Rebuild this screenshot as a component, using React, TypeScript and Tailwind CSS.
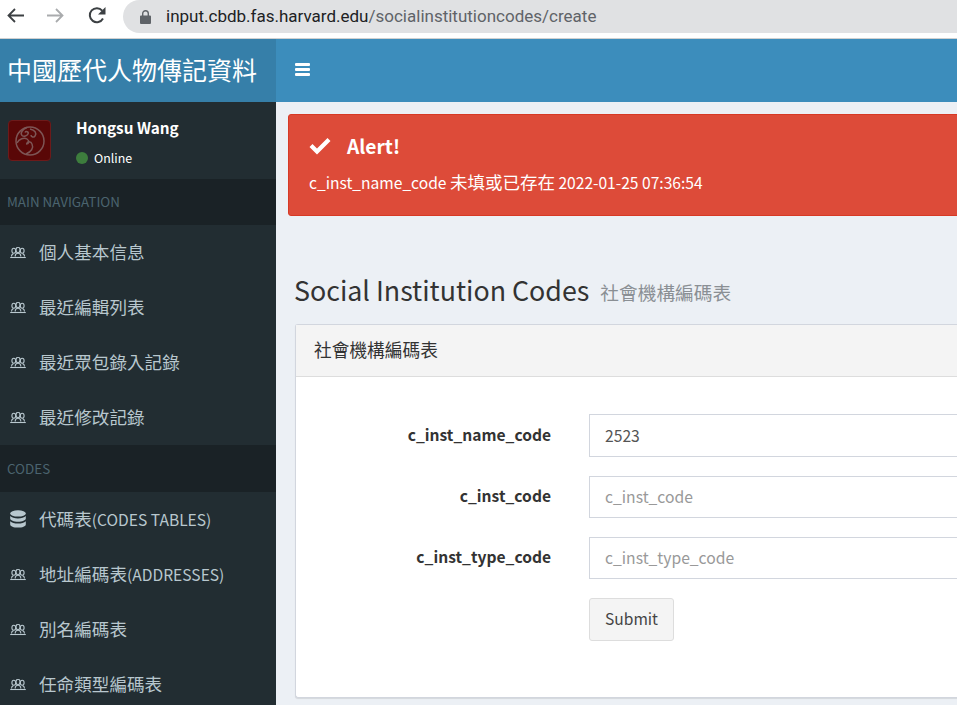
import React from 'react';

const FONT = '"Noto Sans CJK TC", "Noto Sans", sans-serif';

function GroupIcon() {
  return (
    <svg width="16" height="12" viewBox="0 0 16 12" fill="none" stroke="#b8c7ce" strokeWidth="1.1" className="shrink-0">
      <ellipse cx="3.800" cy="3.800" rx="1.900" ry="2.500" />
      <ellipse cx="8" cy="3" rx="2" ry="2.700" />
      <ellipse cx="12.200" cy="3.800" rx="1.900" ry="2.500" />
      <path d="M1.500 9.500c0-1.600.8-2.600 1.900-2.900M14.500 9.500c0-1.600-.8-2.600-1.900-2.900M5.200 9.500c0-2 1.200-3.200 2.800-3.200s2.800 1.200 2.800 3.200" />
      <path d="M0.200 10.500h15.600" />
    </svg>
  );
}

function DatabaseIcon() {
  return (
    <svg width="16" height="19" viewBox="0 0 16 19" fill="#b8c7ce" className="shrink-0">
      <ellipse cx="8" cy="3.400" rx="7.800" ry="3.200" />
      <path d="M.2 6c1.400 1.600 4.500 2.400 7.800 2.400s6.400-.8 7.800-2.400v2.600c0 1.700-3.500 3.200-7.800 3.200S.2 10.300.2 8.600z" />
      <path d="M.2 11.200c1.400 1.600 4.500 2.400 7.800 2.400s6.400-.8 7.800-2.400v3.200c0 1.700-3.500 3.200-7.800 3.200S.2 16.100.2 14.400z" />
    </svg>
  );
}

function Logo() {
  return (
    <div className="w-[43px] h-[41px] rounded-[4px] bg-[#590707] border border-[#6d1a1a] flex items-center justify-center">
      <svg width="32" height="32" viewBox="0 0 32 32" fill="none" stroke="#7d5555" strokeWidth="1.5">
        <circle cx="16" cy="16" r="14" />
        <path d="M13 2.500c-5 2-7 6-5 8 2 1.500 5 .5 6-1.500 1-2-2-3.500-3-1.500" />
        <path d="M3 18c2-4 7-6 10-4 3 2 2 5-1 5" />
        <path d="M12 29c5-2 8-6 6-10-1-3-5-3-5 0" />
        <path d="M16 4c5 1 7 4 5 7-1 2-4 1-4-1" />
      </svg>
    </div>
  );
}

function SectionLabel({ children, heightClass }: { children: React.ReactNode; heightClass: string }) {
  return (
    <div className={`shrink-0 bg-[#1a2226] text-[#4b646f] text-[13.4px] px-[7px] flex items-center ${heightClass}`}>
      <span className="-mt-[1px]">{children}</span>
    </div>
  );
}

function NavItem({ label, latin, icon }: { label: string; latin?: string; icon?: React.ReactNode }) {
  return (
    <div className="h-[55px] shrink-0 flex items-center text-[#b8c7ce] text-[17.6px] pl-[10px]">
      <span className="w-[16px] flex justify-center">{icon ?? <GroupIcon />}</span>
      <span className="ml-[13px] -mt-[1px] whitespace-nowrap">
        {label}
        {latin && <span className="text-[15.6px]">{latin}</span>}
      </span>
    </div>
  );
}

function FormRow({ label, value, placeholder, heightClass }: { label: string; value?: string; placeholder?: string; heightClass: string }) {
  return (
    <div className="flex items-center">
      <label className="w-[255px] shrink-0 text-right font-bold text-[15.6px] text-[#333] -mt-[2px]">{label}</label>
      <div className={`ml-[38px] w-[500px] shrink-0 border border-[#d2d6de] px-[15px] flex items-center text-[15.7px] ${heightClass} ${value ? 'text-[#555]' : 'text-[#999]'}`}>
        {value ?? placeholder}
      </div>
    </div>
  );
}

export default function App() {
  return (
    <div className="w-[957px] h-[705px] overflow-hidden flex flex-col bg-[#ecf0f5]" style={{ fontFamily: FONT }}>
      {/* browser chrome */}
      <div className="h-[39px] shrink-0 bg-white border-b border-[#d0d0d0] flex items-start">
        <div className="flex items-center pl-[7px] h-[31px] gap-[23px]">
          <svg width="17" height="15" viewBox="0 0 17 15" fill="none" stroke="#3c4043" strokeWidth="1.800">
            <path d="M17 7.500H1.500M8 1 1.500 7.500 8 14" />
          </svg>
          <svg width="17" height="15" viewBox="0 0 17 15" fill="none" stroke="#a9abad" strokeWidth="1.800">
            <path d="M0 7.500h15.500M9 1l6.500 6.500L9 14" />
          </svg>
          <svg width="18" height="17" viewBox="0 0 18 17" fill="none" className="ml-[1px]">
            <path d="M15 11.500A7 7 0 1 1 14.200 3.700" stroke="#3c4043" strokeWidth="2" />
            <path d="M17.500 0v7.500H10z" fill="#3c4043" />
          </svg>
        </div>
        <div className="ml-[17px] flex-1 h-[33px] bg-[#e0e1e3] rounded-l-full flex items-center pl-[17px]">
          <svg width="11" height="14" viewBox="0 0 11 14" fill="#5f6368" className="shrink-0">
            <path d="M1 5.500h9a1 1 0 0 1 1 1V13a1 1 0 0 1-1 1H1a1 1 0 0 1-1-1V6.500a1 1 0 0 1 1-1z" />
            <path d="M2.700 6V3.500a2.800 2.800 0 0 1 5.600 0V6" fill="none" stroke="#5f6368" strokeWidth="1.400" />
          </svg>
          <span className="ml-[15px] text-[17px] text-[#202124] whitespace-nowrap" style={{ fontFamily: '"Roboto", sans-serif' }}>
            input.cbdb.fas.harvard.edu<span className="text-[#5f6368]">/socialinstitutioncodes/create</span>
          </span>
        </div>
      </div>

      {/* top bar */}
      <div className="h-[63px] shrink-0 flex">
        <div className="w-[276px] bg-[#367fa9] text-white text-[25px] flex items-center pl-[7px] whitespace-nowrap">
          <span className="-mt-[2px]">中國歷代人物傳記資料</span>
        </div>
        <div className="flex-1 bg-[#3c8dbc] flex items-center pl-[19px]">
          <div className="w-[15px] flex flex-col gap-[2px] -mt-[2px]">
            <span className="h-[3px] bg-white rounded-[1px]" />
            <span className="h-[3px] bg-white rounded-[1px]" />
            <span className="h-[3px] bg-white rounded-[1px]" />
          </div>
        </div>
      </div>

      <div className="flex flex-1 min-h-0">
        {/* sidebar */}
        <aside className="w-[276px] shrink-0 bg-[#222d32] flex flex-col overflow-hidden">
          <div className="h-[77px] shrink-0 flex pl-[8px] pt-[18px]">
            <Logo />
            <div className="ml-[25px] text-white">
              <div className="font-bold text-[15.3px] leading-[20px] -mt-[3px] whitespace-nowrap">Hongsu Wang</div>
              <div className="flex items-center mt-[12px] text-[12.4px] leading-[18px]">
                <span className="w-[12px] h-[12px] rounded-full bg-[#3d7d3d]" />
                <span className="ml-[6px]">Online</span>
              </div>
            </div>
          </div>
          <SectionLabel heightClass="h-[46px]">MAIN NAVIGATION</SectionLabel>
          <NavItem label="個人基本信息" />
          <NavItem label="最近編輯列表" />
          <NavItem label="最近眾包錄入記錄" />
          <NavItem label="最近修改記錄" />
          <SectionLabel heightClass="h-[47px]">CODES</SectionLabel>
          <NavItem label="代碼表" latin="(CODES TABLES)" icon={<DatabaseIcon />} />
          <NavItem label="地址編碼表" latin="(ADDRESSES)" />
          <NavItem label="別名編碼表" />
          <NavItem label="任命類型編碼表" />
        </aside>

        {/* content */}
        <main className="w-[900px] shrink-0 pl-[12px] pt-[12px]">
          <div className="h-[102px] bg-[#dd4b39] border border-[#d73925] rounded-[3px] text-white pl-[20px] pt-[15px]">
            <div className="flex items-center h-[32px]">
              <svg width="22" height="18" viewBox="0 0 22 18" fill="white">
                <path d="M8 17.500 0.500 10l3-3L8 11.500 18.500 1l3 3z" />
              </svg>
              <span className="ml-[16px] font-bold text-[19.2px]">Alert!</span>
            </div>
            <div className="mt-[9px] text-[15.6px] leading-[22px] whitespace-nowrap">
              c_inst_name_code <span className="text-[17.5px]">未填或已存在</span> 2022-01-25 07:36:54
            </div>
          </div>

          <div className="mt-[54px] ml-[6px] flex items-baseline h-[40px]">
            <h1 className="text-[26.8px] text-[#333] leading-[40px] whitespace-nowrap">Social Institution Codes</h1>
            <span className="ml-[11px] text-[18.700px] text-[#8a8f94] whitespace-nowrap -translate-y-[1px]">社會機構編碼表</span>
          </div>

          <div className="mt-[14px] ml-[7px] h-[374px] bg-white border border-[#d2d6de] border-r-0 rounded-[3px] shadow-[0_1px_1px_rgba(0,0,0,0.1)]">
            <div className="h-[52px] bg-[#f4f4f4] border-b border-[#ddd] flex items-center pl-[18px] text-[17.700px] text-[#333]">
              <span className="-mt-[2px]">社會機構編碼表</span>
            </div>
            <div className="pt-[37px] flex flex-col">
              <FormRow label="c_inst_name_code" value="2523" heightClass="h-[43px]" />
              <div className="h-[19px]" />
              <FormRow label="c_inst_code" placeholder="c_inst_code" heightClass="h-[42px]" />
              <div className="h-[19px]" />
              <FormRow label="c_inst_type_code" placeholder="c_inst_type_code" heightClass="h-[42px]" />
              <button className="mt-[19px] ml-[293px] w-[85px] h-[43px] bg-[#f4f4f4] border border-[#ddd] rounded-[3px] text-[15.6px] text-[#444]">
                <span className="block -mt-[1px]">Submit</span>
              </button>
            </div>
          </div>
        </main>
      </div>
    </div>
  );
}
